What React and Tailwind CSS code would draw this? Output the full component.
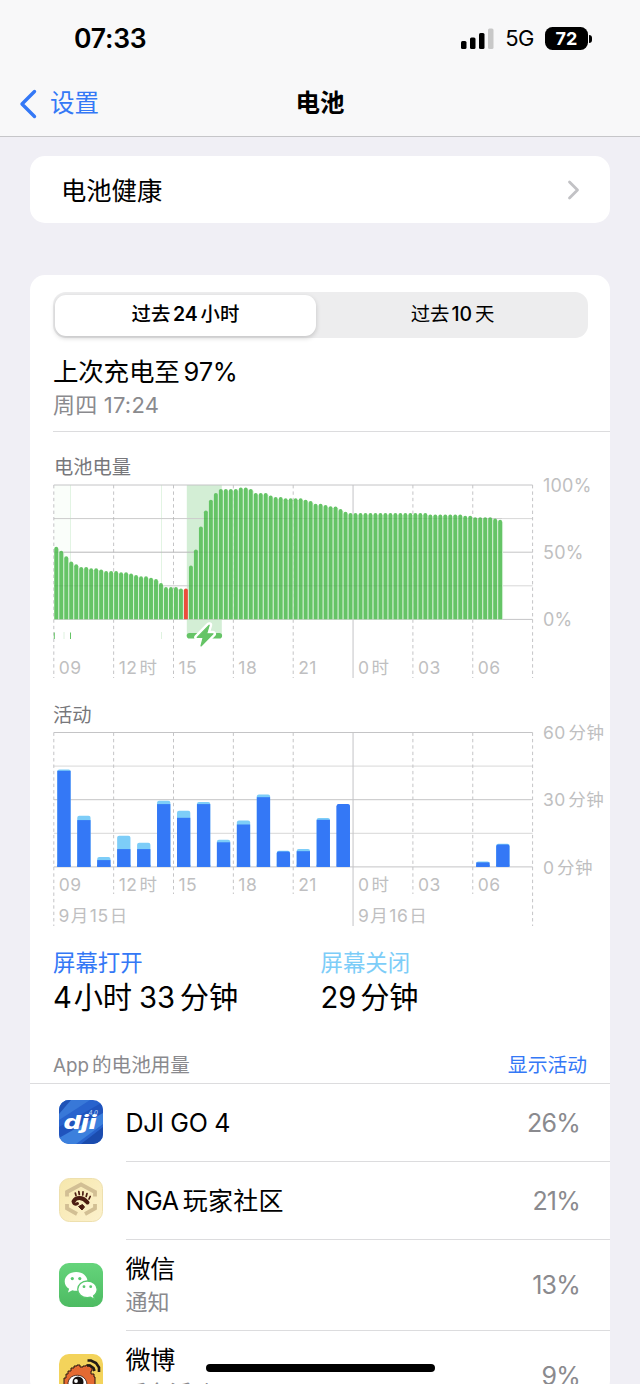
import { Fragment } from "react";

const HOUR = 19.95;
const LEFT = 23.8;
const hourX = (h) => LEFT + h * HOUR;

// battery level in percent, one value per 15 minutes
const levels = [
	54, 51, 47, 43, 41, 39, 39, 38, 38, 37, 36, 36, 36, 35, 35, 34, 33, 32, 32,
	31, 30, 27, 24, 24, 24, 23, 23, 40, 52, 69, 81, 89, 94, 97, 97, 97, 97, 98,
	98, 97, 94, 94, 94, 92, 91, 91, 90, 90, 90, 90, 89, 88, 86, 86, 85, 84, 84,
	82, 80, 79, 79, 79, 79, 79, 79, 79, 79, 79, 79, 79, 79, 79, 79, 79, 79, 78,
	78, 78, 78, 78, 78, 78, 77, 77, 76, 76, 76, 76, 75, 74,
];
const LOW_INDEX = 26;

// bar heights: total and screen-on part
const activity = [
	{ hour: 0, total: 97.3, on: 96 },
	{ hour: 1, total: 51, on: 46.7 },
	{ hour: 2, total: 9.7, on: 6.7 },
	{ hour: 3, total: 31, on: 17.7 },
	{ hour: 4, total: 24, on: 17.7 },
	{ hour: 5, total: 66, on: 62.7 },
	{ hour: 6, total: 56, on: 49 },
	{ hour: 7, total: 64.7, on: 62.7 },
	{ hour: 8, total: 27, on: 24.5 },
	{ hour: 9, total: 46.3, on: 42.3 },
	{ hour: 10, total: 72.4, on: 69.6 },
	{ hour: 11, total: 16, on: 15.4 },
	{ hour: 12, total: 17.7, on: 15.6 },
	{ hour: 13, total: 48.7, on: 47 },
	{ hour: 14, total: 62.7, on: 62.4 },
	{ hour: 21, total: 5.4, on: 4.4 },
	{ hour: 22, total: 23, on: 22.2 },
];

const hourLabels = [
	["09"],
	["12", "时"],
	["15"],
	["18"],
	["21"],
	["0", "时"],
	["03"],
	["06"],
];

function Grid({ top, step, lineEnd, longEnd }) {
	return (
		<g fill="none" strokeWidth="1">
			{[0, 1, 2, 3, 4].map((i) => (
				<path
					key={i}
					d={`M${LEFT} ${top + i * step}H${hourX(24)}`}
					stroke={i % 2 ? "#d8d8d8" : "#c4c4c6"}
				/>
			))}
			{[0, 1, 2, 3, 4, 5, 6, 7, 8].map((i) => (
				<path
					key={i}
					d={`M${hourX(i * 3)} ${top}V${i % 8 === 0 || i === 5 ? longEnd : lineEnd}`}
					stroke="#c4c4c6"
					strokeDasharray={i === 5 ? undefined : "3.4 3"}
				/>
			))}
		</g>
	);
}

function HourLabels({ y }) {
	return (
		<g fill="#bfbfc1" fontSize="17.5" letterSpacing="0.5">
			{hourLabels.map(([num, unit], i) => (
				<text key={i} x={hourX(i * 3) + 5} y={y}>
					{num}
					{unit && <tspan dx="2">{unit}</tspan>}
				</text>
			))}
		</g>
	);
}

function BatteryChart() {
	const base = 141.3;
	return (
		<svg width="580" height="216" viewBox="0 0 580 216" className="block overflow-visible">
			<rect x="156.8" y="7" width="35" height="151" fill="#d3eed5" />
			<rect x="24" y="7" width="17" height="134" fill="#fafefa" />
			<path d="M40.5 7V141M131.5 7V141" stroke="#e2f4e3" strokeWidth="1" />
			<Grid top={7} step={33.6} lineEnd={200} longEnd={200} />
			{levels.map((level, i) => {
				const x = LEFT + 0.5 + i * 4.9875;
				const y = base - level * 1.345;
				return (
					<g key={i}>
						<rect x={x} y={y + 2} width="4.9" height={base - y - 2} fill="#d6f1d7" />
						<path
							d={`M${x} ${base}V${y + 2}a1.95 1.95 0 0 1 3.9 0V${base}z`}
							fill={i === LOW_INDEX ? "#eb4e3d" : "#65c466"}
						/>
					</g>
				);
			})}
			{[1, 2, 3].map((i) => (
				<path key={i} d={`M24 ${7 + i * 33.6}H472`} stroke="#000" strokeOpacity="0.06" />
			))}
			<path d="M24.3 154.5v6.5M40.5 154.5v6.5" stroke="#65c466" strokeWidth="1" />
			<path d="M131.5 154v7M34 154v7" stroke="#dff2e0" strokeWidth="1" />
			<path d="M159.5 157.7H189.3" stroke="#65c466" strokeWidth="5.6" strokeLinecap="round" />
			{/* charging bolt */}
			<path
				d="M179.2 147.2L167.2 159.4H173.2L171 168L183 155.8H176.6Z"
				fill="#fff"
				stroke="#fff"
				strokeWidth="6"
				strokeLinejoin="round"
			/>
			<path
				d="M179.2 147.2L167.2 159.4H173.2L171 168L183 155.8H176.6Z"
				fill="#65c466"
				stroke="#65c466"
				strokeWidth="1.2"
				strokeLinejoin="round"
			/>
			<HourLabels y={195.5} />
			<g fill="#bfbfc1" fontSize="18" letterSpacing="0.2">
				<text x="513" y="13.5">100%</text>
				<text x="513" y="80.5">50%</text>
				<text x="513" y="147.5">0%</text>
			</g>
		</svg>
	);
}

function ActivityChart() {
	const base = 140.8;
	return (
		<svg width="580" height="206" viewBox="0 0 580 206" className="block overflow-visible">
			<Grid top={6.5} step={33.6} lineEnd={168} longEnd={200} />
			{activity.map(({ hour, total, on }) => {
				const x = hourX(hour) + 3.5;
				return (
					<Fragment key={hour}>
						<path
							d={`M${x} ${base}v${-(total - 2)}q0 -2 2 -2h9.3q2 0 2 2v${total - 2}z`}
							fill={total - on < 0.5 ? "#3478f6" : "#7dcdf8"}
						/>
						<rect x={x} y={base - on} width="13.3" height={on} rx={total - on < 1 ? 2 : 0} fill="#3478f6" />
						<rect x={x} y={base - 2} width="13.3" height="2" fill="#3478f6" />
					</Fragment>
				);
			})}
			<HourLabels y={165} />
			<g fill="#bfbfc1" fontSize="17.5" letterSpacing="0.5">
				<text x="28.5" y="195.500">9<tspan dx="1">月</tspan><tspan dx="1">15</tspan><tspan dx="1">日</tspan></text>
				<text x="328" y="195.500">9<tspan dx="1">月</tspan><tspan dx="1">16</tspan><tspan dx="1">日</tspan></text>
				<text x="513" y="13">60<tspan dx="2.500">分钟</tspan></text>
				<text x="513" y="80">30<tspan dx="2.500">分钟</tspan></text>
				<text x="513" y="147.500">0<tspan dx="2.500">分钟</tspan></text>
			</g>
		</svg>
	);
}

function DjiIcon() {
	return (
		<svg width="44" height="44" viewBox="0 0 44 44">
			<defs>
				<clipPath id="dji-clip">
					<rect width="44" height="44" rx="10" />
				</clipPath>
			</defs>
			<g clipPath="url(#dji-clip)">
				<rect width="44" height="44" fill="#2863cd" />
				<path d="M0 0H31L0 20Z" fill="#3878d8" />
				<path d="M0 0H12L0 14Z" fill="#1e52b6" />
				<path d="M0 27L44 2V15L0 39Z" fill="#2054bd" />
				<path d="M0 44V38L44 13V24L17 44Z" fill="#3c80dd" />
				<path d="M22 44L44 27V44Z" fill="#1b4cae" />
			</g>
			<text
				x="4.5"
				y="28.5"
				fill="#fff"
				fontSize="19"
				fontWeight="800"
				fontStyle="italic"
				textLength="33"
				lengthAdjust="spacingAndGlyphs"
			>
				dji
			</text>
			<text x="29.500" y="14.500" fill="#b4d2fa" fontSize="6" fontWeight="500" fontStyle="italic">4.0</text>
		</svg>
	);
}

function NgaIcon() {
	return (
		<svg width="44" height="44" viewBox="0 0 44 44">
			<defs>
				<linearGradient id="nga-bg" x1="0" y1="0" x2="1" y2="1">
					<stop offset="0" stopColor="#f6e7ac" />
					<stop offset="1" stopColor="#fcf1cd" />
				</linearGradient>
			</defs>
			<rect x="0.5" y="0.5" width="43" height="43" rx="10" fill="url(#nga-bg)" stroke="#eee0ae" />
			<path
				d="M8 18.500V14L22 6.500L36 14V18.500M8 26V30.500L18 36M36 26V30.500L26 36"
				fill="none"
				stroke="#d2bf94"
				strokeWidth="3.8"
			/>
			<g fill="none" stroke="#4c1d12" strokeLinecap="round">
				<path d="M14.500 23.500C17 19 23.500 18.500 28.500 24.500" strokeWidth="4" />
				<path d="M14.500 24C14.500 26.500 17 26.500 18.500 25.500" strokeWidth="3" />
				<path d="M17 17.500L16.300 15M20.300 16.500L19.800 13.500M23.800 17L24 13.800M27.200 18.500L28 15.500M30 21L31.200 18.500" strokeWidth="1.7" />
			</g>
			<path d="M19.500 28.500L23.500 26.500L25.500 29L23 32Z" fill="#4c1d12" stroke="#4c1d12" strokeLinejoin="round" />
		</svg>
	);
}

function WechatIcon() {
	return (
		<svg width="44" height="44" viewBox="0 0 44 44">
			<defs>
				<linearGradient id="wechat-bg" x1="0" y1="0" x2="0" y2="1">
					<stop offset="0" stopColor="#65d47b" />
					<stop offset="1" stopColor="#4dbb62" />
				</linearGradient>
			</defs>
			<rect width="44" height="44" rx="10" fill="url(#wechat-bg)" />
			<path d="M17.2 9C10.6 9 5.7 13.2 5.7 18.4C5.7 21.5 7.4 24 10.1 25.7L9 29.5L13.4 27.2A14 14 0 0 0 17.2 27.8C23.8 27.8 28.5 23.6 28.5 18.4S23.8 9 17.2 9Z" fill="#fff" />
			<path
				d="M28.3 18C22.9 18 18.7 21.7 18.7 26.3S22.9 34.6 28.3 34.6A13 13 0 0 0 31.5 34.2L35.5 36.3L34.6 32.7C36.8 31.2 38.2 28.9 38.2 26.3C38.2 21.7 33.9 18 28.3 18Z"
				fill="#fff"
				stroke="#58c86e"
				strokeWidth="1.3"
			/>
			<g fill="#58c86e">
				<circle cx="13.3" cy="15.6" r="1.6" />
				<circle cx="20.8" cy="15.6" r="1.6" />
				<circle cx="25" cy="23.7" r="1.4" />
				<circle cx="31.7" cy="23.7" r="1.4" />
			</g>
		</svg>
	);
}

function WeiboIcon() {
	return (
		<svg width="44" height="44" viewBox="0 0 44 44">
			<rect width="44" height="44" rx="10" fill="#f3d35b" />
			<path
				d="M5 31V24H7V20H9V17H12V14H15V12H18V11H21V13H24V12H27V11H31V13H33V17H32V20H35V23H36V32C32 42 9 42 5 31Z"
				fill="#e46a32"
				stroke="#2a1712"
				strokeWidth="1"
			/>
			<path d="M9 31C8 18 28 18 28 31C28 38 10 38 9 31Z" fill="#fff" stroke="#2a1712" strokeWidth="0.8" />
			<circle cx="19" cy="28" r="5.5" fill="#15100f" />
			<circle cx="17" cy="27" r="1.9" fill="#fff" />
			<path d="M28.5 6.5H32L37 9L40 13.500V18M28 11.500H31L34.500 14L35.500 17" fill="none" stroke="#221b15" strokeWidth="2.6" />
		</svg>
	);
}

function StatusBar() {
	return (
		<div className="flex h-[72px] items-center pt-[5px] pr-[48px] pl-[74px]">
			<span className="text-[26.5px] font-semibold tracking-[-0.2px]">07:33</span>
			<svg width="33" height="22" viewBox="0 0 33 22" className="ml-auto">
				<rect x="0" y="13" width="5.5" height="8" rx="1.5" />
				<rect x="9" y="9.5" width="5.5" height="11.5" rx="1.5" />
				<rect x="18" y="5" width="5.5" height="16" rx="1.5" />
				<rect x="27" y="0.5" width="5.5" height="20.5" rx="1.5" fill="#c8c8c8" />
			</svg>
			<span className="ml-[11px] text-[22px] tracking-[-0.5px]">5G</span>
			<div className="ml-[11px] flex h-[23px] w-[43px] items-center justify-center rounded-[7.5px] bg-black text-[18px] font-bold text-white">
				72
			</div>
			<div className="ml-px h-2 w-[3px] rounded-r-full bg-black" />
		</div>
	);
}

function AppRow({ icon, name, detail, percent, height }) {
	return (
		<div className={`flex pl-[29px] ${height}`}>
			<div className={detail ? "pt-[23px]" : "pt-4"}>{icon}</div>
			<div className="ml-[22.5px] flex flex-1 justify-between border-b border-[#dcdcde] pr-[30px]">
				<div className={detail ? "pt-3" : "pt-[22px]"}>
					<div className="text-[25px] leading-[34px] tracking-[-0.3px] whitespace-nowrap">{name}</div>
					{detail && (
						<div className="text-[22px] leading-8 whitespace-nowrap text-[#8a8a8e]">{detail}</div>
					)}
				</div>
				<div className="self-center pt-0.5 text-[25px] tracking-[-0.8px] text-[#8a8a8e]">{percent}</div>
			</div>
		</div>
	);
}

function App() {
	return (
		<div className="relative h-[1384px] w-[640px] overflow-hidden bg-[#f0eff5] font-['Inter','Noto_Sans_CJK_SC',sans-serif] text-black [text-autospace:no-autospace]">
			<header className="h-[137px] border-b border-[#c6c6c9] bg-[#f8f8f9]">
				<StatusBar />
				<div className="grid h-[63px] grid-cols-3 items-center">
					<div className="flex items-center pl-[19px] text-[24.5px] text-[#3478f6]">
						<svg width="18" height="30" viewBox="0 0 18 30" fill="none" stroke="#3478f6" strokeWidth="3.4" strokeLinecap="round" strokeLinejoin="round">
							<path d="M15.5 2.5L3 15L15.5 27.5" />
						</svg>
						<span className="ml-[13px]">设置</span>
					</div>
					<h1 className="text-center text-[24.5px] font-bold">电池</h1>
				</div>
			</header>

			<div className="mx-[30px] mt-[19px] flex h-[67px] items-center justify-between rounded-[15px] bg-white pr-[30px] pl-[31px]">
				<span className="pt-0.5 text-[25.3px]">电池健康</span>
				<svg width="13" height="20" viewBox="0 0 13 20" fill="none" stroke="#c2c2c5" strokeWidth="2.8" strokeLinecap="round" strokeLinejoin="round">
					<path d="M2.5 2L10.5 10L2.5 18" />
				</svg>
			</div>

			<main className="mx-[30px] mt-[52px] h-[1120px] rounded-[15px] bg-white pt-[17px]">
				<div className="mx-[22.5px] flex h-[46px] rounded-[13px] bg-[#ededee] p-[2.5px] text-[19.4px]">
					<div className="flex w-[261px] items-center justify-center rounded-[11px] bg-white font-medium shadow-[0_2px_5px_rgba(0,0,0,0.18)]">
						过去<span className="mr-[3px] ml-[2.5px] font-semibold">24</span>小时
					</div>
					<div className="flex flex-1 items-center justify-center pl-1">
						过去<span className="mr-[3px] ml-[2px] font-medium">10</span>天
					</div>
				</div>

				<div className="ml-[23px] h-[94px] border-b border-[#dcdcde] pt-4">
					<div className="text-[25.5px] leading-9 tracking-[-0.2px]">
						上次充电至<span className="ml-1">97%</span>
					</div>
					<div className="text-[22px] leading-[30px] tracking-[0.2px] text-[#8a8a8e]">周四 17:24</div>
				</div>

				<h2 className="mt-[21px] ml-6 h-[25px] text-[19.3px] leading-[29px] text-[#77777b]">电池电量</h2>
				<BatteryChart />
				<h2 className="mt-[7px] ml-[23px] h-[25px] text-[19.3px] leading-[29px] text-[#77777b]">活动</h2>
				<ActivityChart />

				<div className="mt-[15px] flex pl-[23px]">
					<div className="w-[267.5px]">
						<div className="text-[22.4px] leading-8 text-[#3478f6]">屏幕打开</div>
						<div className="text-[29.2px] leading-[38px] tracking-[-0.1px]">
							4<span className="ml-[2px]">小时</span><span className="mr-[5px] ml-[7px]">33</span>分钟
						</div>
					</div>
					<div>
						<div className="text-[22.4px] leading-8 text-[#7dcdf8]">屏幕关闭</div>
						<div className="text-[29.2px] leading-[38px] tracking-[-0.1px]">
							29<span className="ml-[4px]">分钟</span>
						</div>
					</div>
				</div>

				<div className="mt-[31px] flex h-[36px] justify-between border-b border-[#dcdcde] pr-[23px] pl-[23px]">
					<span className="text-[18.8px] leading-[35px] text-[#8a8a8e]">
						App<span className="ml-[3px] text-[19.6px]">的电池用量</span>
					</span>
					<span className="text-[19.8px] leading-[34px] text-[#3478f6]">显示活动</span>
				</div>
				<AppRow icon={<DjiIcon />} name="DJI GO 4" percent="26%" height="h-[78px]" />
				<AppRow
					icon={<NgaIcon />}
					name={<>NGA<span className="ml-1 tracking-[0.2px]">玩家社区</span></>}
					percent="21%"
					height="h-[78px]"
				/>
				<AppRow icon={<WechatIcon />} name="微信" detail="通知" percent="13%" height="h-[91px]" />
				<AppRow icon={<WeiboIcon />} name="微博" detail="后台活动" percent="9%" height="h-[91px]" />
			</main>

			<div className="absolute top-[1364px] left-[206px] h-2 w-[229px] rounded-full bg-black" />
		</div>
	);
}

export default App;
